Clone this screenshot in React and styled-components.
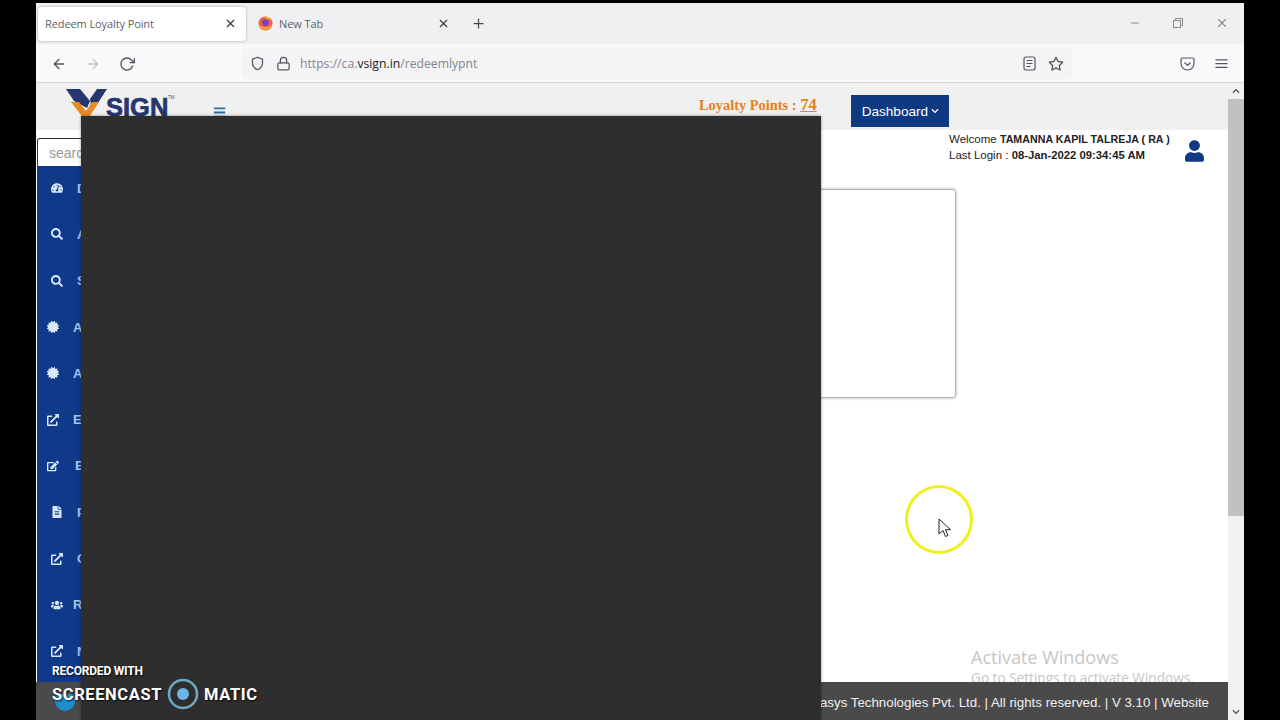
import React from "react";
import styled, { createGlobalStyle } from "styled-components";
import {
  FaTachometerAlt,
  FaSearch,
  FaCertificate,
  FaExternalLinkAlt,
  FaEdit,
  FaFileAlt,
  FaUsers,
  FaUser,
  FaChevronDown,
  FaChevronUp,
  FaBars,
} from "react-icons/fa";
import { FiArrowLeft, FiArrowRight, FiRotateCw, FiShield, FiLock, FiStar, FiX, FiPlus, FiMenu, FiMinus } from "react-icons/fi";

const GlobalStyle = createGlobalStyle`
  html, body {
    margin: 0;
    background: #000;
    overflow: hidden;
  }
  * { box-sizing: border-box; }
`;

const Stage = styled.div`
  position: relative;
  width: 1280px;
  height: 720px;
  padding: 3px 36px 0;
  background: #000;
  overflow: hidden;
`;

const Browser = styled.div`
  display: flex;
  flex-direction: column;
  height: 717px;
  background: #fff;
  font-family: "Open Sans", "Noto Sans", sans-serif;
`;

const TabBar = styled.div`
  display: flex;
  align-items: flex-start;
  height: 41px;
  padding: 4px 0 0 2px;
  background: #f0f0f2;
`;

const Tab = styled.div`
  display: flex;
  align-items: center;
  width: ${(p) => (p.active ? "208px" : "204px")};
  height: 34px;
  padding: ${(p) => (p.active ? "0 9px 2px 7px" : "0 0 2px 12px")};
  background: ${(p) => (p.active ? "#fff" : "transparent")};
  border-radius: 4px;
  box-shadow: ${(p) => (p.active ? "0 0 3px rgba(0,0,0,.3)" : "none")};
  font-size: 11px;
  letter-spacing: -0.1px;
  color: #5f5f66;
`;

const TabTitle = styled.span`
  flex: 1;
  margin-left: ${(p) => (p.icon ? "6px" : "0")};
`;

const TabClose = styled(FiX)`
  width: 13px;
  height: 13px;
  color: #333;
`;

const NewTab = styled(FiPlus)`
  width: 15px;
  height: 15px;
  margin: 9px 0 0 21px;
  color: #444;
`;

const WindowButtons = styled.div`
  display: flex;
  align-items: center;
  gap: 32px;
  height: 32px;
  margin-left: auto;
  padding-right: 15px;
  color: #8a8a8a;
`;

const Toolbar = styled.div`
  display: flex;
  align-items: center;
  height: 39px;
  padding: 1px 15px 0;
  background: #f9f9fb;
  border-bottom: 1px solid #d5d5d8;
`;

const NavButton = styled.span`
  display: flex;
  width: 34px;
  color: ${(p) => (p.off ? "#c4c4c8" : "#55555c")};
  font-size: 16px;
`;

const UrlBar = styled.div`
  display: flex;
  align-items: center;
  width: 830px;
  height: 31px;
  margin-left: 89px;
  padding: 0 8px;
  background: #f4f4f6;
  border-radius: 4px;
  color: #55555c;
  font-size: 15px;
`;

const LockIcon = styled(FiLock)`
  margin-left: 11px;
`;

const Url = styled.span`
  margin-left: 9px;
  font-size: 12.2px;
  color: #85858c;
  b { font-weight: 400; color: #222; }
`;

const UrlIcons = styled.div`
  display: flex;
  align-items: center;
  gap: 12px;
  margin-left: auto;
`;

const ToolbarEnd = styled.div`
  display: flex;
  align-items: center;
  gap: 19px;
  margin-left: auto;
  color: #55555c;
`;

const Viewport = styled.div`
  flex: 1;
  display: flex;
  min-height: 0;
`;

const Page = styled.div`
  flex: 1;
  display: flex;
  flex-direction: column;
  min-width: 0;
  background: #fff;
`;

const Header = styled.div`
  display: flex;
  height: 47px;
  background: #f0f0f0;
  flex-shrink: 0;
`;

const Logo = styled.div`
  display: flex;
  align-items: flex-start;
  width: 177px;
  height: 47px;
  padding: 4px 0 0 28px;
`;

const Hamburger = styled(FaBars)`
  width: 13px;
  height: 13px;
  margin-top: 23px;
  color: #2d6ca8;
`;

const Points = styled.div`
  margin-left: 473px;
  padding-top: 12px;
  font-family: "Liberation Serif", serif;
  font-size: 14.4px;
  font-weight: 700;
  color: #e67e22;
  u { font-size: 16.5px; }
`;

const DashboardButton = styled.div`
  display: flex;
  align-items: center;
  gap: 3px;
  height: 32px;
  margin: 12px 0 0 34px;
  padding: 0 10px 0 11px;
  background: #0f3a82;
  color: #fff;
  font-family: "Liberation Sans", sans-serif;
  font-size: 13.6px;
  svg { width: 8px; height: 8px; }
`;

const Body = styled.div`
  flex: 1;
  display: flex;
  min-height: 0;
`;

const Sidebar = styled.div`
  display: flex;
  flex-direction: column;
  width: 200px;
  padding-top: 8px;
  flex-shrink: 0;
`;

const Search = styled.div`
  height: 28px;
  margin-left: 1px;
  padding: 6px 11px;
  border: 1px solid #333;
  border-bottom: 0;
  border-radius: 3px 0 0 0;
  background: #fff;
  font-family: "Liberation Sans", sans-serif;
  font-size: 14px;
  color: #999;
`;

const Menu = styled.div`
  flex: 1;
  margin-left: 1px;
  background: #0f3a8a;
`;

const MenuItem = styled.div`
  display: flex;
  align-items: center;
  gap: ${(p) => p.gap}px;
  height: 46.3px;
  padding: 0 0 2px ${(p) => p.pad}px;
  font-family: "Liberation Sans", sans-serif;
  font-size: 13px;
  font-weight: 700;
  color: #a9c6ea;
  svg { width: 12px; height: 12px; color: #d9e9fb; flex-shrink: 0; }
`;

const Content = styled.div`
  flex: 1;
  display: flex;
  flex-direction: column;
  min-width: 0;
`;

const UserRow = styled.div`
  display: flex;
  justify-content: flex-end;
  gap: 14px;
  padding: 1px 24px 0 0;
`;

const UserText = styled.div`
  width: 222px;
  font-family: "Liberation Sans", sans-serif;
  font-size: 11.5px;
  line-height: 16px;
  color: #222;
`;

const UserName = styled.b`
  font-size: 10.7px;
`;

const LoginDate = styled.b`
  font-size: 11.3px;
`;

const UserIcon = styled(FaUser)`
  width: 19px;
  height: 24px;
  margin-top: 8px;
  color: #0f3a82;
`;

const Card = styled.div`
  width: 367px;
  height: 209px;
  margin: 26px 0 0 353px;
  border: 1px solid #b5b5b5;
  border-radius: 3px;
  box-shadow: 0 0 3px rgba(0, 0, 0, 0.35);
`;

const Footer = styled.div`
  display: flex;
  align-items: center;
  justify-content: flex-end;
  height: 38px;
  padding: 3px 19px 0 0;
  background: #4a4a4a;
  color: #f0f0f0;
  font-family: "Liberation Sans", sans-serif;
  font-size: 13.3px;
  flex-shrink: 0;
`;

const Scrollbar = styled.div`
  display: flex;
  flex-direction: column;
  align-items: center;
  width: 16px;
  background: #f1f1f1;
  color: #505050;
  svg { width: 8px; height: 8px; margin: 4px 0; }
`;

const Thumb = styled.div`
  width: 100%;
  height: 417px;
  background: #c1c1c1;
`;

const ScrollEnd = styled.div`
  margin-top: auto;
  display: flex;
`;

const Modal = styled.div`
  position: absolute;
  left: 81px;
  top: 116px;
  width: 740px;
  height: 604px;
  background: #2e2e2e;
  box-shadow: 0 0 3px rgba(0, 0, 0, 0.4);
`;

const Activate = styled.div`
  position: absolute;
  left: 971px;
  top: 646px;
  height: 36px;
  overflow: hidden;
  font-family: "Open Sans", sans-serif;
  color: #c6c6c6;
  font-size: 18px;
  line-height: 22px;
`;

const ActivateSub = styled.div`
  font-size: 13.6px;
  line-height: 20px;
`;

const CursorRing = styled.div`
  position: absolute;
  left: 905px;
  top: 485px;
  width: 68px;
  height: 69px;
  border: 3px solid #f0f020;
  border-radius: 50%;
`;

const Cursor = styled.svg`
  position: absolute;
  left: 938px;
  top: 518px;
`;

const Watermark = styled.div`
  position: absolute;
  left: 52px;
  top: 664px;
  color: #fff;
  font-family: Roboto, "Liberation Sans", sans-serif;
  font-weight: 700;
  text-shadow: 1px 1px 2px rgba(0, 0, 0, 0.8);
`;

const WatermarkTop = styled.div`
  font-size: 12px;
  letter-spacing: -0.2px;
`;

const WatermarkRow = styled.div`
  display: flex;
  align-items: center;
  gap: 5px;
  font-size: 16.5px;
  letter-spacing: 0.6px;
`;

const StripLogo = styled.svg`
  position: absolute;
  left: 54px;
  top: 694px;
`;

function VsignLogo() {
  return (
    <svg width="112" height="34" viewBox="0 0 112 34">
      <path d="M2 2H16L26 14 23 21 10 14z" fill="#26366f" />
      <path d="M26 12 33 2H43L30 22 27 18z" fill="#26366f" />
      <path d="M7 15H15L22 24 28 15H35L24 32H20z" fill="#e98a25" />
      <text x="42" y="29" fontFamily="'Liberation Sans', sans-serif" fontWeight="700" fontSize="25.5" fill="#26366f" stroke="#26366f" strokeWidth="0.7">SIGN</text>
      <text x="104" y="12" fontFamily="'Liberation Sans', sans-serif" fontSize="4.500" fill="#555">TM</text>
    </svg>
  );
}

function FirefoxIcon() {
  return (
    <svg width="15" height="15" viewBox="0 0 16 16">
      <circle cx="8" cy="8" r="7.500" fill="#f2603c" />
      <path d="M8 .5a7.500 7.500 0 0 1 6.800 4.400C13 3.600 11 3 9 3.500z" fill="#fdb72b" />
      <circle cx="8" cy="7" r="3.600" fill="#7b3fc4" />
      <path d="M1 9c1 3 4 5.500 7 5.500S14 12 15 9c-2 2.500-4 3-7 3S3 11 1 9z" fill="#f9b233" />
    </svg>
  );
}

function ReaderIcon() {
  return (
    <svg width="13" height="15" viewBox="0 0 13 15" fill="none" stroke="#55555c" strokeWidth="1.2">
      <rect x="1" y="1" width="11" height="13" rx="2" />
      <path d="M3.500 4.500h6M3.500 7.500h6M3.500 10.500h4" />
    </svg>
  );
}

function PocketIcon() {
  return (
    <svg width="15" height="14" viewBox="0 0 15 14" fill="none" stroke="#55555c" strokeWidth="1.2">
      <path d="M1 2.500A1.500 1.500 0 0 1 2.500 1h10A1.500 1.500 0 0 1 14 2.500V6.500a6.500 6.500 0 0 1-13 0z" />
      <path d="M4.500 5.500 7.500 8.500l3-3" />
    </svg>
  );
}

function RestoreIcon() {
  return (
    <svg width="10" height="10" viewBox="0 0 10 10" fill="none" stroke="#8a8a8a" strokeWidth="1">
      <rect x="0.5" y="2.500" width="7" height="7" />
      <path d="M2.500 2.500V.5h7v7H7.500" />
    </svg>
  );
}

// only the first letter of each label is visible, the rest sits behind the dark panel
const menu = [
  [FaTachometerAlt, "D", 14, 14],
  [FaSearch, "A", 14, 14],
  [FaSearch, "S", 14, 14],
  [FaCertificate, "A", 10, 14],
  [FaCertificate, "A", 10, 14],
  [FaExternalLinkAlt, "E", 10, 14],
  [FaEdit, "E", 10, 16],
  [FaFileAlt, "P", 14, 14],
  [FaExternalLinkAlt, "C", 14, 14],
  [FaUsers, "R", 14, 10],
  [FaExternalLinkAlt, "N", 14, 14],
];

export default function App() {
  return (
    <>
      <GlobalStyle />
      <Stage>
        <Browser>
          <TabBar>
            <Tab active>
              <TabTitle>Redeem Loyalty Point</TabTitle>
              <TabClose />
            </Tab>
            <Tab>
              <FirefoxIcon />
              <TabTitle icon>New Tab</TabTitle>
              <TabClose />
            </Tab>
            <NewTab />
            <WindowButtons>
              <FiMinus size={12} />
              <RestoreIcon />
              <FiX size={14} />
            </WindowButtons>
          </TabBar>
          <Toolbar>
            <NavButton><FiArrowLeft /></NavButton>
            <NavButton off><FiArrowRight /></NavButton>
            <NavButton><FiRotateCw /></NavButton>
            <UrlBar>
              <FiShield />
              <LockIcon />
              <Url>https://ca.<b>vsign.in</b>/redeemlypnt</Url>
              <UrlIcons>
                <ReaderIcon />
                <FiStar size={16} />
              </UrlIcons>
            </UrlBar>
            <ToolbarEnd>
              <PocketIcon />
              <FiMenu size={15} />
            </ToolbarEnd>
          </Toolbar>
          <Viewport>
            <Page>
              <Header>
                <Logo><VsignLogo /></Logo>
                <Hamburger />
                <Points>Loyalty Points : <u>74</u></Points>
                <DashboardButton>Dashboard <FaChevronDown /></DashboardButton>
              </Header>
              <Body>
                <Sidebar>
                  <Search>search</Search>
                  <Menu>
                    {menu.map(([Icon, label, pad, gap], i) => (
                      <MenuItem key={i} pad={pad} gap={gap}>
                        <Icon />
                        {label}
                      </MenuItem>
                    ))}
                  </Menu>
                </Sidebar>
                <Content>
                  <UserRow>
                    <UserText>
                      Welcome <UserName>TAMANNA KAPIL TALREJA ( RA )</UserName>
                      <br />
                      Last Login : <LoginDate>08-Jan-2022 09:34:45 AM</LoginDate>
                    </UserText>
                    <UserIcon />
                  </UserRow>
                  <Card />
                </Content>
              </Body>
              <Footer>asys Technologies Pvt. Ltd. | All rights reserved. | V 3.10 | Website</Footer>
            </Page>
            <Scrollbar>
              <FaChevronUp />
              <Thumb />
              <ScrollEnd><FaChevronDown /></ScrollEnd>
            </Scrollbar>
          </Viewport>
        </Browser>
        <StripLogo width="22" height="20" viewBox="0 0 22 20">
          <circle cx="11" cy="7" r="10" fill="#1c8ed0" />
        </StripLogo>
        <Activate>
          Activate Windows
          <ActivateSub>Go to Settings to activate Windows.</ActivateSub>
        </Activate>
        <Modal />
        <CursorRing />
        <Cursor width="14" height="20" viewBox="0 0 14 20">
          <path d="M1 1v15l4-3.500 2.500 6 2.500-1-2.500-5.800h5z" fill="#fff" stroke="#222" strokeWidth="1" />
        </Cursor>
        <Watermark>
          <WatermarkTop>RECORDED WITH</WatermarkTop>
          <WatermarkRow>
            SCREENCAST
            <svg width="32" height="32" viewBox="0 0 32 32">
              <circle cx="16" cy="16" r="14" fill="none" stroke="#6fa8c4" strokeWidth="2.500" />
              <circle cx="16" cy="16" r="6" fill="#6fb4e8" />
            </svg>
            MATIC
          </WatermarkRow>
        </Watermark>
      </Stage>
    </>
  );
}
